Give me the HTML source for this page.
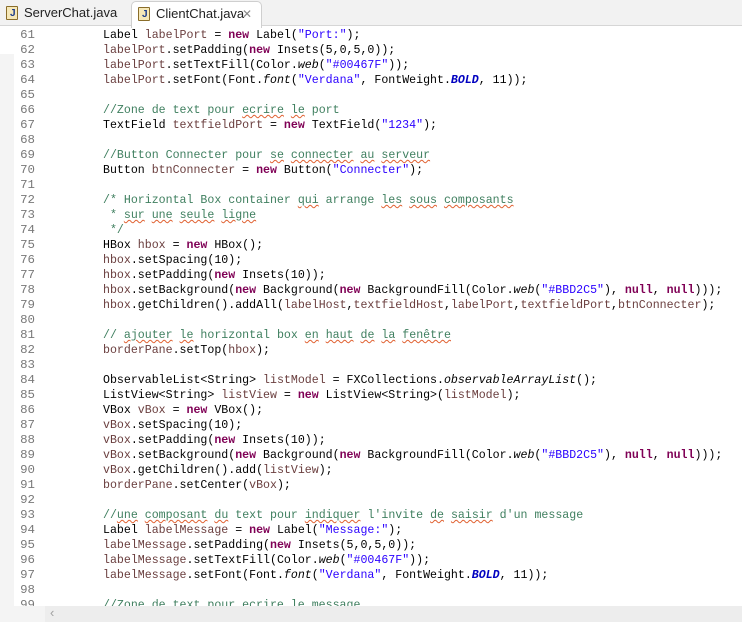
<!DOCTYPE html>
<html><head><meta charset="utf-8">
<style>
*{margin:0;padding:0;box-sizing:border-box}
html,body{width:742px;height:622px;overflow:hidden;background:#fff;font-family:"Liberation Sans",sans-serif}
.tabbar{position:absolute;left:0;top:0;width:742px;height:26px;background:#f2f2f2;border-bottom:1px solid #d6d6d6}
.tab{position:absolute;top:1px;height:25px;font-size:13px;color:#222;line-height:24px;padding-left:24px}
.t1{left:0;width:131px}
.t2{left:131px;width:131px;background:#fff;border:1px solid #cfcfcf;border-bottom:none;border-radius:5px 5px 0 0;height:27px}
.ic{position:absolute;left:6px;top:5px;width:12px;height:14px;border:1px solid #8a6d2a;background:#f6e8b8;border-radius:1px}
.ic:after{content:"J";position:absolute;left:3px;top:-5px;font-size:10px;font-weight:bold;color:#1a3a8a}
.x{position:absolute;left:110px;top:0;color:#888;font-size:12px}
.gut{position:absolute;left:0;top:27px;width:14px;height:580px;background:#f4f4f4}
.ln{position:absolute;left:14px;top:27px;width:21px;text-align:right;font:12.4px/15px "Liberation Mono",monospace;color:#787878;white-space:pre}
.code{position:absolute;left:103px;top:27px;font:11.6px/15px "Liberation Mono",monospace;color:#000;white-space:pre}
.ed{position:absolute;left:0;top:27px;width:742px;height:580px;overflow:hidden}
.k{color:#7f0055;font-weight:bold}
.s{color:#2a00ff}
.c{color:#3f7f5f}
.v{color:#6a3e3e}
.i{font-style:italic}
.f{color:#0000c0;font-style:italic;font-weight:bold}
.w{text-decoration:underline wavy #e06030;text-decoration-thickness:1px}
.hs{position:absolute;left:0;top:606px;width:742px;height:16px;background:#f4f4f4}
.hs2{position:absolute;left:45px;top:606px;width:697px;height:16px;background:#ededed;color:#a0a0a0;font-size:13px;line-height:14px;padding-left:5px}
</style></head><body>
<div class="tabbar">
<div class="tab t1"><span class="ic"></span>ServerChat.java</div>
<div class="tab t2"><span class="ic"></span>ClientChat.java<span class="x">&#x2715;</span></div>
</div>
<div class="ed">
<div class="gut"></div>
<div class="ln" style="top:1px">61
62
63
64
65
66
67
68
69
70
71
72
73
74
75
76
77
78
79
80
81
82
83
84
85
86
87
88
89
90
91
92
93
94
95
96
97
98
99</div>
<div class="code" style="top:1px">Label <span class="v">labelPort</span> = <span class="k">new</span> Label(<span class="s">"Port:"</span>);
<span class="v">labelPort</span>.setPadding(<span class="k">new</span> Insets(5,0,5,0));
<span class="v">labelPort</span>.setTextFill(Color.<span class="i">web</span>(<span class="s">"#00467F"</span>));
<span class="v">labelPort</span>.setFont(Font.<span class="i">font</span>(<span class="s">"Verdana"</span>, FontWeight.<span class="f">BOLD</span>, 11));

<span class="c">//Zone de text pour <span class="w">ecrire</span> <span class="w">le</span> port</span>
TextField <span class="v">textfieldPort</span> = <span class="k">new</span> TextField(<span class="s">"1234"</span>);

<span class="c">//Button Connecter pour <span class="w">se</span> <span class="w">connecter</span> <span class="w">au</span> <span class="w">serveur</span></span>
Button <span class="v">btnConnecter</span> = <span class="k">new</span> Button(<span class="s">"Connecter"</span>);

<span class="c">/* Horizontal Box container <span class="w">qui</span> arrange <span class="w">les</span> <span class="w">sous</span> <span class="w">composants</span></span>
<span class="c"> * <span class="w">sur</span> <span class="w">une</span> <span class="w">seule</span> <span class="w">ligne</span></span>
<span class="c"> */</span>
HBox <span class="v">hbox</span> = <span class="k">new</span> HBox();
<span class="v">hbox</span>.setSpacing(10);
<span class="v">hbox</span>.setPadding(<span class="k">new</span> Insets(10));
<span class="v">hbox</span>.setBackground(<span class="k">new</span> Background(<span class="k">new</span> BackgroundFill(Color.<span class="i">web</span>(<span class="s">"#BBD2C5"</span>), <span class="k">null</span>, <span class="k">null</span>)));
<span class="v">hbox</span>.getChildren().addAll(<span class="v">labelHost</span>,<span class="v">textfieldHost</span>,<span class="v">labelPort</span>,<span class="v">textfieldPort</span>,<span class="v">btnConnecter</span>);

<span class="c">// <span class="w">ajouter</span> <span class="w">le</span> horizontal box <span class="w">en</span> <span class="w">haut</span> <span class="w">de</span> <span class="w">la</span> <span class="w">fenêtre</span></span>
<span class="v">borderPane</span>.setTop(<span class="v">hbox</span>);

ObservableList&lt;String&gt; <span class="v">listModel</span> = FXCollections.<span class="i">observableArrayList</span>();
ListView&lt;String&gt; <span class="v">listView</span> = <span class="k">new</span> ListView&lt;String&gt;(<span class="v">listModel</span>);
VBox <span class="v">vBox</span> = <span class="k">new</span> VBox();
<span class="v">vBox</span>.setSpacing(10);
<span class="v">vBox</span>.setPadding(<span class="k">new</span> Insets(10));
<span class="v">vBox</span>.setBackground(<span class="k">new</span> Background(<span class="k">new</span> BackgroundFill(Color.<span class="i">web</span>(<span class="s">"#BBD2C5"</span>), <span class="k">null</span>, <span class="k">null</span>)));
<span class="v">vBox</span>.getChildren().add(<span class="v">listView</span>);
<span class="v">borderPane</span>.setCenter(<span class="v">vBox</span>);

<span class="c">//<span class="w">une</span> <span class="w">composant</span> <span class="w">du</span> text pour <span class="w">indiquer</span> l'invite <span class="w">de</span> <span class="w">saisir</span> d'un message</span>
Label <span class="v">labelMessage</span> = <span class="k">new</span> Label(<span class="s">"Message:"</span>);
<span class="v">labelMessage</span>.setPadding(<span class="k">new</span> Insets(5,0,5,0));
<span class="v">labelMessage</span>.setTextFill(Color.<span class="i">web</span>(<span class="s">"#00467F"</span>));
<span class="v">labelMessage</span>.setFont(Font.<span class="i">font</span>(<span class="s">"Verdana"</span>, FontWeight.<span class="f">BOLD</span>, 11));

<span class="c">//Zone de text pour ecrire le message</span></div>
</div>
<div class="hs"></div>
<div class="hs2">&lsaquo;</div>
</body></html>
